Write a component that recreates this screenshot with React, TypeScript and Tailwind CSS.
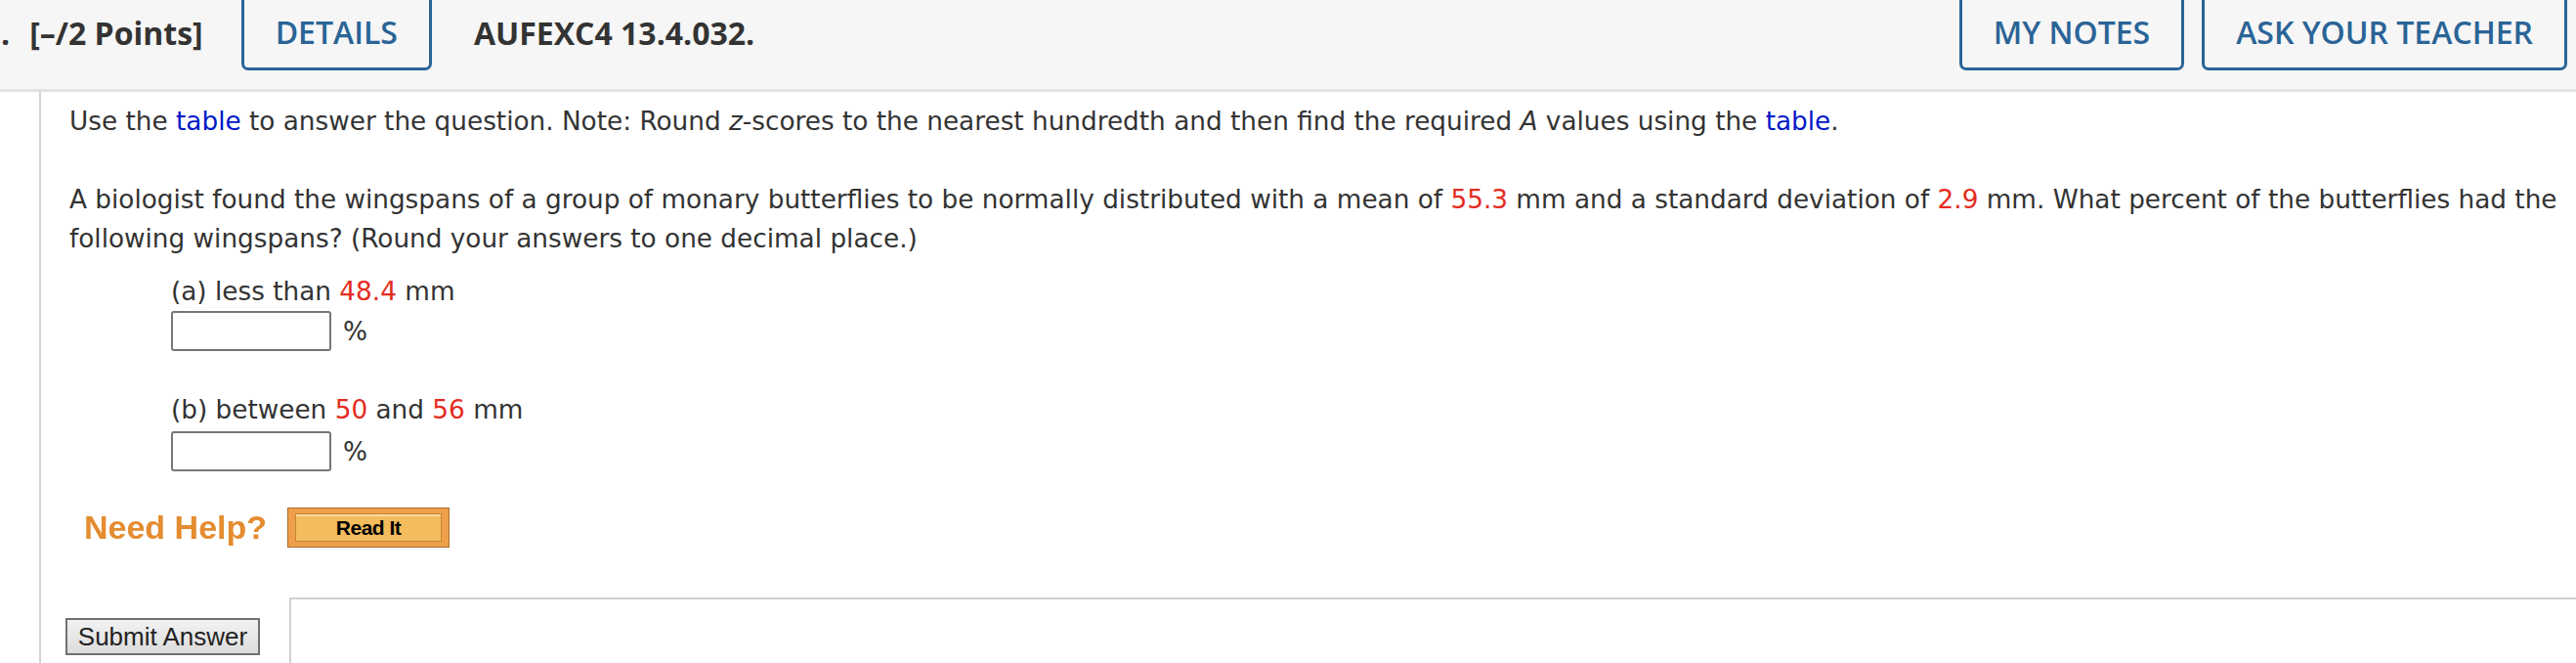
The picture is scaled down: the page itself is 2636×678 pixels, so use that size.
import React from 'react';

const red = 'text-[#e52b20]';

function AnswerBox() {
  return (
    <div className="flex items-center">
      <div className="w-[164px] h-[41px] border-2 border-[#767676] rounded-[3px] bg-white" />
      <span className="ml-[12px]">%</span>
    </div>);

}

function HeaderButton({ label }: {label: string;}) {
  return (
    <div className="-mt-[10px] self-stretch flex items-center pt-[4px] px-[32px] border-[3px] border-[#2a6496] rounded-[7px] text-[#2a6496] text-[32px] font-semibold">
      {label}
    </div>);

}

export default function App() {
  return (
    <div className="w-[2636px] h-[678px] overflow-hidden bg-white text-[#333]">
      {/* question header */}
      <div className="h-[94px] bg-[#f6f6f6] border-b-[3px] border-[#e2e2e2] font-['Open_Sans',sans-serif] text-[32px]">
        <div className="h-[72px] flex items-center">
          <div className="flex items-center pb-[4px] font-bold">
            <span className="ml-[1px]">.</span>
            <span className="ml-[20px]">[–/2 Points]</span>
          </div>
          <div className="ml-[39px] self-stretch flex">
            <HeaderButton label="DETAILS" />
          </div>
          <div className="ml-[43px] pb-[4px] font-bold">AUFEXC4 13.4.032.</div>
          <div className="ml-auto mr-[9px] self-stretch flex gap-[18px]">
            <HeaderButton label="MY NOTES" />
            <HeaderButton label="ASK YOUR TEACHER" />
          </div>
        </div>
      </div>

      {/* question body */}
      <div className="ml-[40px] border-l-2 border-[#d4d4d4] h-[584px] font-['DejaVu_Sans',Verdana,sans-serif] text-[26.3px] leading-[40px]">
        <div className="pl-[29px] pt-[10px]">
          <p>
            Use the <span className="text-[#0018c8]">table</span> to answer the question. Note: Round <i>z</i>-scores to the nearest hundredth and then find the required <i>A</i> values using the <span className="text-[#0018c8]">table</span>.
          </p>
          <p className="mt-[40px]">
            A biologist found the wingspans of a group of monary butterflies to be normally distributed with a mean of <span className={red}>55.3</span> mm and a standard deviation of <span className={red}>2.9</span> mm. What percent of the butterflies had the following wingspans? (Round your answers to one decimal place.)
          </p>

          <div className="ml-[104px] mt-[14px]">
            <div>
              (a) less than <span className={red}>48.4</span> mm
            </div>
            <AnswerBox />
            <div className="mt-[40px]">
              (b) between <span className={red}>50</span> and <span className={red}>56</span> mm
            </div>
            <div className="mt-[2px]">
              <AnswerBox />
            </div>
          </div>

          <div className="mt-[37px] ml-[15px] flex items-center font-['Liberation_Sans',Arial,sans-serif]">
            <span className="text-[34px] font-bold text-[#e48c30] leading-[41px] blur-[0.4px]">Need Help?</span>
            <div className="ml-[21px] w-[166px] h-[41px] border border-[#a86f2c] bg-[#ee9f48] p-[5px_7px]">
              <div className="h-full border border-[#c48736] bg-[#f4bc5c] shadow-[inset_0_2px_0_#f9d9a0] flex items-center justify-center text-[21px] font-bold text-black tracking-[-0.5px]">
                Read It
              </div>
            </div>
          </div>
        </div>

        <div className="mt-[51px] flex items-start">
          <button className="ml-[25px] mt-[21px] w-[199px] h-[38px] border-2 border-[#707070] bg-gradient-to-b from-[#f2f2f2] to-[#dcdcdc] font-['Liberation_Sans',Arial,sans-serif] text-[26px] leading-none text-[#222]">
            Submit Answer
          </button>
          <div className="ml-[30px] flex-1 h-[80px] border-t-2 border-l-2 border-[#d0d0d0]" />
        </div>
      </div>
    </div>);

}
